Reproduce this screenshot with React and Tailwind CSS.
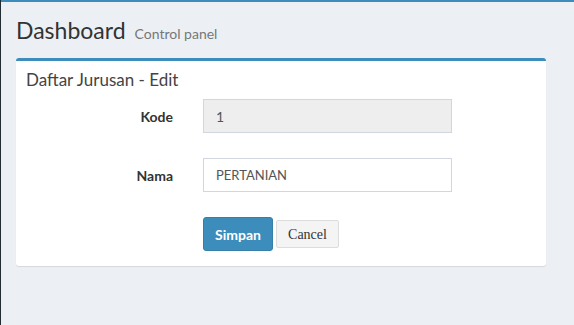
import React, { useState } from 'react';

const Field = ({ label, children }) => (
  <div className="flex items-center">
    <label className="w-[172px] pr-[15px] text-right text-[14px] font-bold text-[#333]">{label}</label>
    <div className="pl-[15px]">{children}</div>
  </div>
);

export default function App() {
  const [nama, setNama] = useState('PERTANIAN');

  return (
    <div className="flex min-h-[325px] w-[574px] bg-[#222d32] font-['Lato','Noto_Sans',sans-serif]">
      <div className="ml-[1px] flex-1 border-t-2 border-[#3c8dbc] bg-[#ecf0f5]">
        <div className="px-[15px] pt-[15px]">
          <div className="flex h-[26px] items-baseline">
            <h1 className="m-0 text-[23px] leading-[26px] text-[#333]">Dashboard</h1>
            <small className="pl-[9px] text-[14px] leading-[26px] text-[#777]">Control panel</small>
          </div>
        </div>

        <div className="pl-[15px] pr-[28px] pt-[15px]">
          <div className="rounded-[3px] border-t-[3px] border-[#3c8dbc] bg-white shadow-[0_1px_1px_rgba(0,0,0,0.1)]">
            <div className="h-[38px] p-[10px]">
              <h3 className="text-[17px] leading-[18px] text-[#444]">Daftar Jurusan - Edit</h3>
            </div>

            <form className="flex flex-col gap-[25px] pb-[15px]" onSubmit={e => e.preventDefault()}>
              <Field label="Kode">
                <input
                  type="text"
                  value="1"
                  disabled
                  className="h-[34px] w-[249px] border border-[#d2d6de] bg-[#eee] px-[12px] text-[14px] text-[#555] outline-none"
                />
              </Field>
              <Field label="Nama">
                <input
                  type="text"
                  value={nama}
                  onChange={e => setNama(e.target.value)}
                  className="h-[34px] w-[249px] border border-[#d2d6de] bg-white px-[12px] text-[13px] text-[#555] outline-none focus:border-[#3c8dbc]"
                />
              </Field>
              <div className="flex items-center gap-[3px] pl-[187px]">
                <button type="submit" className="h-[34px] w-[70px] rounded-[3px] border border-[#367fa9] bg-[#3c8dbc] text-[14px] font-bold text-white">
                  Simpan
                </button>
                <button type="button" className="h-[28px] w-[63px] rounded-[2px] border border-[#ddd] bg-[#f4f4f4] font-['Liberation_Serif',serif] text-[14px] text-[#333]">
                  Cancel
                </button>
              </div>
            </form>
          </div>
        </div>
      </div>
    </div>
  );
}
